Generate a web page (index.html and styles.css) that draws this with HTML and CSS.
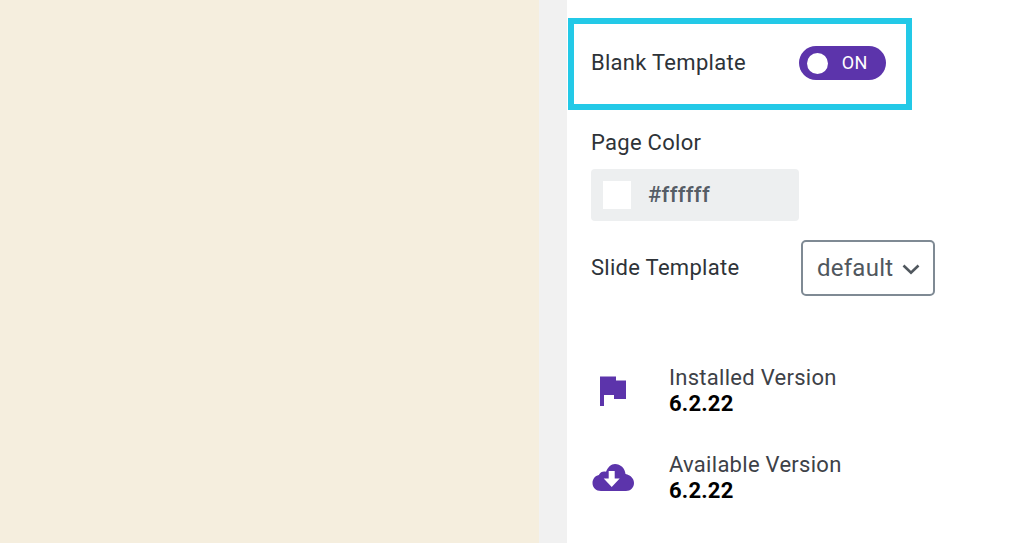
FILE: index.html
```html
<!DOCTYPE html>
<html lang="en">
<head>
<meta charset="utf-8">
<title>Slide settings</title>
<link rel="stylesheet" href="styles.css">
</head>
<body>
<main class="canvas"></main>
<div class="gutter"></div>
<aside class="panel">
  <section class="highlight">
    <span class="label">Blank Template</span>
    <div class="toggle"><span class="knob"></span><span class="toggle-text">ON</span></div>
  </section>
  <section class="body">
    <div class="label page-label">Page Color</div>
    <div class="color-field"><span class="swatch"></span><span class="hex">#ffffff</span></div>
    <div class="template-row">
      <span class="label template-label">Slide Template</span>
      <div class="select"><span>default</span>
        <svg class="chev" width="18" height="11" viewBox="0 0 18 11"><path d="M1.500 1.500 9 8.800l7.500-7.300" fill="none" stroke="#50575e" stroke-width="2.600"/></svg>
      </div>
    </div>
    <div class="version first">
      <div class="icon">
        <svg width="28" height="30" viewBox="0 0 28 30"><path fill="#5c34ab" d="M1 0.500h16v4h10v18.500H15v-4H5V30H1z"/></svg>
      </div>
      <div class="version-text"><div class="version-name">Installed Version</div><div class="version-num">6.2.22</div></div>
    </div>
    <div class="version">
      <div class="icon cloud">
        <svg width="43" height="29" viewBox="0 0 43 29"><path fill="#5c34ab" d="M9 28C4 28 .5 24.500 .5 20c0-3.900 2.600-7 6.300-7.900C8.500 9 11 8 14 8.800 16 4 19 1 23 1c5.500 0 10 4.300 10.500 10 5 1 8.500 4.500 8.500 9 0 4.500-3.500 8-8 8z"/><path fill="#fff" d="M16.700 8h6v7.500h5L19.700 24l-8-8.500h5z"/></svg>
      </div>
      <div class="version-text"><div class="version-name">Available Version</div><div class="version-num">6.2.22</div></div>
    </div>
  </section>
</aside>
</body>
</html>
```
FILE: styles.css
```css
* { box-sizing: border-box; }
html, body { margin: 0; height: 100%; }
body {
  display: flex;
  height: 543px;
  overflow: hidden;
  background: #fff;
  font-family: Roboto, "Liberation Sans", sans-serif;
  color: #2e3338;
}
.canvas { width: 539px; background: #f5eede; }
.gutter { width: 28px; background: #f1f1f1; }
.panel { flex: 1; padding: 18px 0 0 1px; }
.highlight {
  width: 344px;
  height: 92px;
  border: 6px solid #23c9e7;
  padding-left: 17px;
  padding-bottom: 2px;
  display: flex;
  align-items: center;
}
.label { font-size: 22px; line-height: 28px; letter-spacing: 0.28px; }
.toggle {
  margin-left: 53px;
  width: 87px;
  height: 34px;
  border-radius: 17px;
  background: #5c34ab;
  display: flex;
  align-items: center;
  padding: 0 0 2px 8px;
}
.knob { width: 21px; height: 21px; border-radius: 50%; background: #fff; margin-top: 2px; }
.toggle-text { color: #fff; font-size: 18px; margin-left: 14px; letter-spacing: 0.2px; }
.body { padding: 19px 0 0 23px; }
.color-field {
  margin-top: 12px;
  width: 208px;
  height: 52px;
  background: #edeff0;
  border-radius: 4px;
  display: flex;
  align-items: center;
  padding-left: 12px;
  padding-bottom: 2px;
}
.swatch { width: 28px; height: 28px; background: #fff; margin-top: 2px; }
.hex { margin-left: 17px; font-size: 22px; font-weight: 500; color: #555d66; letter-spacing: 0.3px; }
.template-row { margin-top: 19px; display: flex; align-items: center; }
.template-label { width: 210px; }
.select {
  width: 134px;
  height: 56px;
  border: 2px solid #7f8a94;
  border-radius: 5px;
  display: flex;
  align-items: center;
  padding-left: 14px;
  font-size: 24px;
  color: #50575e;
  letter-spacing: 0.25px;
}
.chev { margin-left: 9px; margin-top: 2px; }
.version { display: flex; align-items: center; margin-top: 32px; height: 55px; }
.version.first { margin-top: 67px; }
.icon { width: 78px; display: flex; justify-content: flex-start; }
.first .icon { padding-left: 8px; }
.cloud { padding-left: 1px; }
.version-text { line-height: 26px; }
.version-name { font-size: 22px; color: #3d4147; letter-spacing: 0.28px; }
.version-num { font-size: 22px; font-weight: 700; color: #000; letter-spacing: 0.2px; }
```
